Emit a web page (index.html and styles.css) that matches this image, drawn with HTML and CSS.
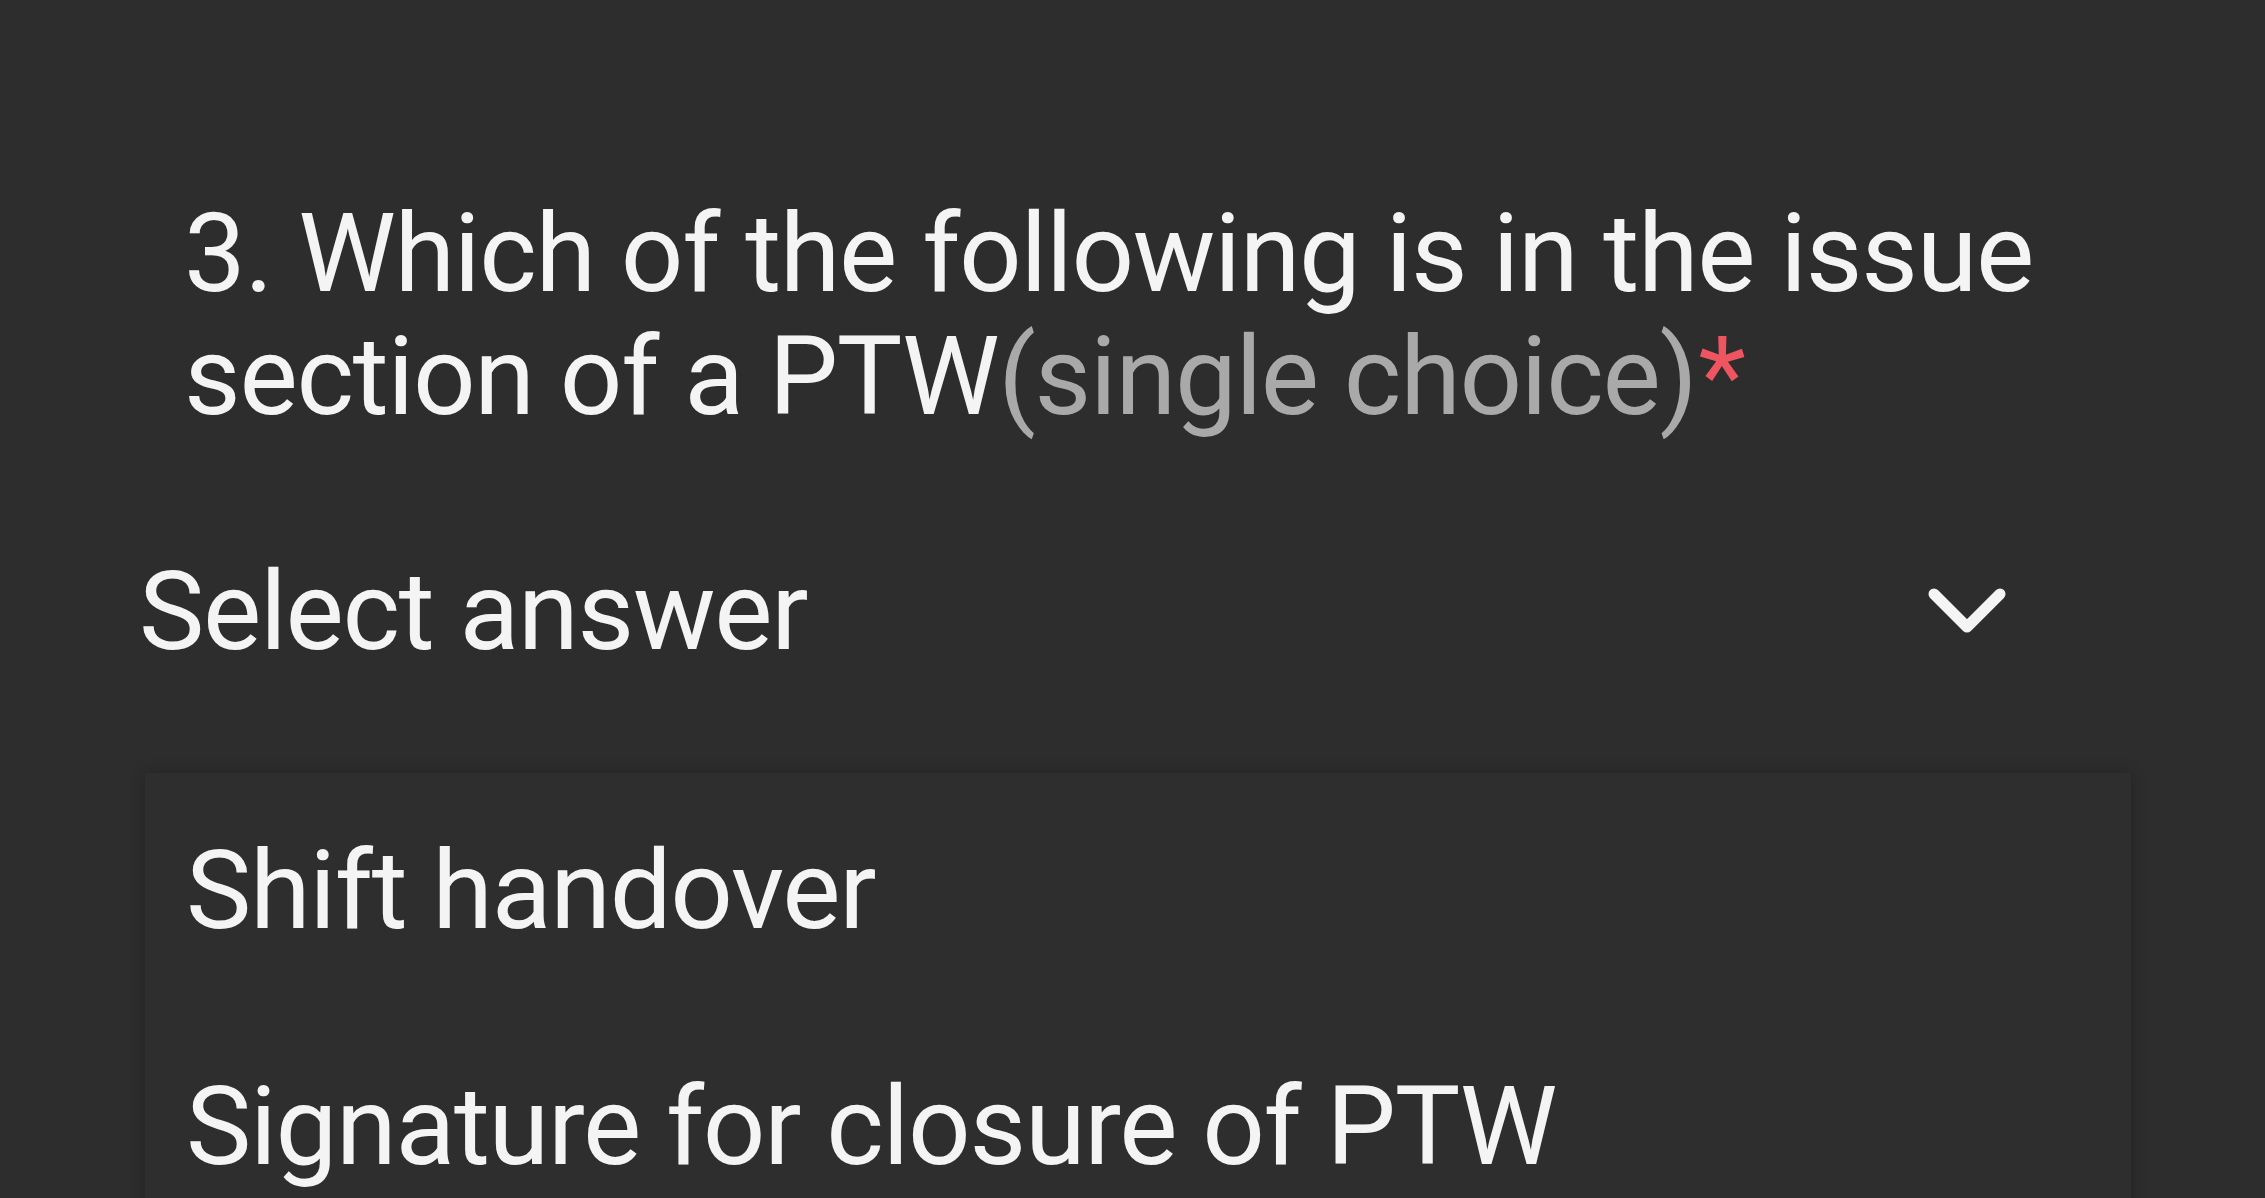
FILE: index.html
```html
<!DOCTYPE html>
<html lang="en">

<head>
  <meta charset="UTF-8" />
  <meta name="viewport" content="width=device-width, initial-scale=1.0" />
  <title>Question 3</title>
  <link rel="stylesheet" href="styles.css">
</head>

<body>
  <div class="wrap">
    <div class="question">
      3. Which of the following is in the issue section of a PTW<span class="hint">(single choice)</span><span class="req">*</span>
    </div>
    <div class="select">
      <span>Select answer</span>
      <svg class="chevron" width="80" height="50" viewBox="0 0 80 50">
        <polyline points="7,7 40,40 73,7" fill="none" stroke="#f4f4f4" stroke-width="11" stroke-linecap="round" stroke-linejoin="round" />
      </svg>
    </div>
    <ul class="menu">
      <li>Shift handover</li>
      <li>Signature for closure of PTW</li>
    </ul>
  </div>
</body>

</html>
```

FILE: styles.css
```css
body {
  padding: 0;
  margin: 0;
  font-family: Roboto, "Liberation Sans", sans-serif;
  background: #2d2d2d;
  color: #f4f4f4;
  overflow: hidden;
}

.wrap {
  font-size: 110px;
  line-height: 123px;
  letter-spacing: -1.3px;
}

.question {
  margin: 192px 160px 0 184px;
}

.hint {
  color: #a9a9a9;
}

.req {
  color: #ef5560;
  margin-left: 2px;
}

.select {
  display: flex;
  justify-content: space-between;
  align-items: center;
  margin: 112px 0 0 139px;
  width: 1868px;
}

.chevron {
  display: block;
}

.menu {
  list-style: none;
  margin: 100px 0 0 145px;
  padding: 0;
  width: 1986px;
  background: #2e2e2e;
  box-shadow: 0 0 14px rgba(0, 0, 0, 0.22);
}

.menu>li {
  padding: 56px 41px 57px;
  white-space: nowrap;
}
```
